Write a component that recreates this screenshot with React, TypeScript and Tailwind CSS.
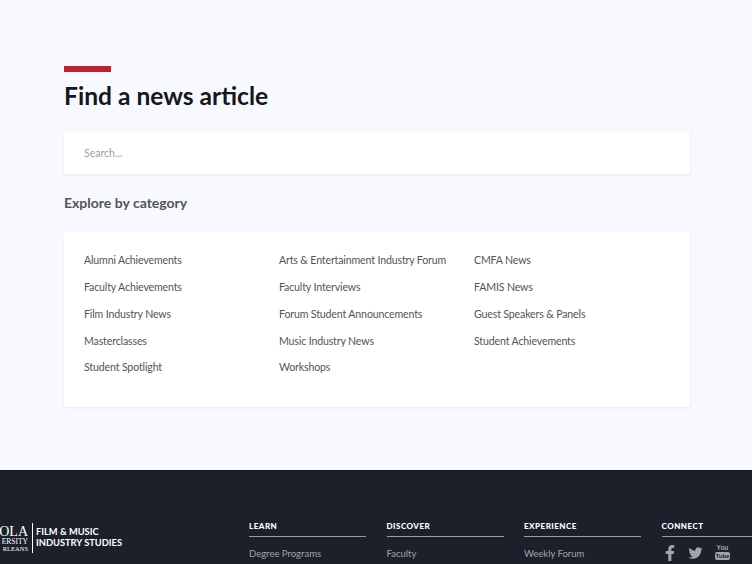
import { FaFacebookF, FaTwitter } from "react-icons/fa";

const categories = [
  ["Alumni Achievements", "Faculty Achievements", "Film Industry News", "Masterclasses", "Student Spotlight"],
  ["Arts & Entertainment Industry Forum", "Faculty Interviews", "Forum Student Announcements", "Music Industry News", "Workshops"],
  ["CMFA News", "FAMIS News", "Guest Speakers & Panels", "Student Achievements"],
];

const footerCols = [
  { title: "LEARN", link: "Degree Programs" },
  { title: "DISCOVER", link: "Faculty" },
  { title: "EXPERIENCE", link: "Weekly Forum" },
];

export default function App() {
  return (
    <div className="h-[564px] w-[752px] overflow-hidden bg-[#f8f9fe] font-['Lato',sans-serif] antialiased">
      {/* main */}
      <section className="h-[470px] pt-[66px] pr-[62px] pl-16">
        <div className="h-[6px] w-[47px] bg-[#c3202e]"></div>
        <h1 className="mt-[7px] text-[24.6px] leading-[34px] font-bold text-[#14171c]">Find a news article</h1>
        <div className="mt-[19px] flex h-[42px] items-center bg-white px-[20px] pt-px text-[10.5px] text-[#9b9ea3] shadow-[0_1px_2px_rgba(30,40,70,0.08)]">
          Search...
        </div>
        <h2 className="mt-[20px] text-[14px] leading-[18px] font-bold text-[#50555b]">Explore by category</h2>
        <div className="mt-[20px] flex h-[175px] rounded-[2px] bg-white pt-[20.4px] pl-[20px] shadow-[0_1px_2px_rgba(30,40,70,0.08)]">
          {categories.map((col, i) => (
            <ul key={i} className="w-[195px] space-y-[10.75px]">
              {col.map((c) => (
                <li key={c} className="text-[10.6px] leading-[16px] tracking-[-0.15px] whitespace-nowrap text-[#50555b]">{c}</li>
              ))}
            </ul>
          ))}
        </div>
      </section>

      {/* footer */}
      <footer className="flex h-[94px] border-t border-[#12161e] bg-[#1b202b] pt-[50px]">
        <div className="flex h-[31px] w-[249px] shrink-0 items-start pt-[5px]">
          <div className="flex h-[26px] w-[28px] shrink-0 flex-col items-end overflow-hidden font-['Liberation_Serif',serif] text-white">
            <span className="text-[14px] leading-[12px] whitespace-nowrap">OLA</span>
            <span className="text-[7.5px] leading-[7px] whitespace-nowrap">ERSITY</span>
            <span className="text-[6.5px] leading-[7px] whitespace-nowrap">RLEANS</span>
          </div>
          <div className="mx-[3.5px] -mt-[3px] h-[30px] w-px bg-white"></div>
          <div className="pt-px text-[9.3px] leading-[10.5px] font-bold whitespace-nowrap text-white">
            <div>FILM &amp; MUSIC</div>
            <div>INDUSTRY STUDIES</div>
          </div>
        </div>
        <div className="flex gap-[20.5px]">
          {footerCols.map((c) => (
            <div key={c.title} className="w-[117px] shrink-0">
              <div className="border-b border-[#9a9da2] pb-[4px] text-[8px] leading-[11px] font-black tracking-[0.5px] text-white">{c.title}</div>
              <div className="mt-[10px] text-[9.5px] leading-[13px] text-[#a2a4a8]">{c.link}</div>
            </div>
          ))}
          <div className="w-[117px] shrink-0">
            <div className="border-b border-[#9a9da2] pb-[4px] text-[8px] leading-[11px] font-black tracking-[0.5px] text-white">CONNECT</div>
            <div className="mt-[7px] flex items-start text-[#a2a4a8]">
              <FaFacebookF className="mt-[1px] ml-[3px] h-[16px] w-[10px]" />
              <FaTwitter className="mt-[2px] ml-[12px] h-[14px] w-[17px]" />
              <div className="ml-[11px] flex flex-col items-center font-['Liberation_Sans',sans-serif] font-bold">
                <span className="text-[6.5px] leading-[8px]">You</span>
                <span className="rounded-[2px] bg-[#a2a4a8] px-[1px] text-[6px] leading-[8px] text-[#1b202b]">Tube</span>
              </div>
            </div>
          </div>
        </div>
      </footer>
    </div>
  );
}
